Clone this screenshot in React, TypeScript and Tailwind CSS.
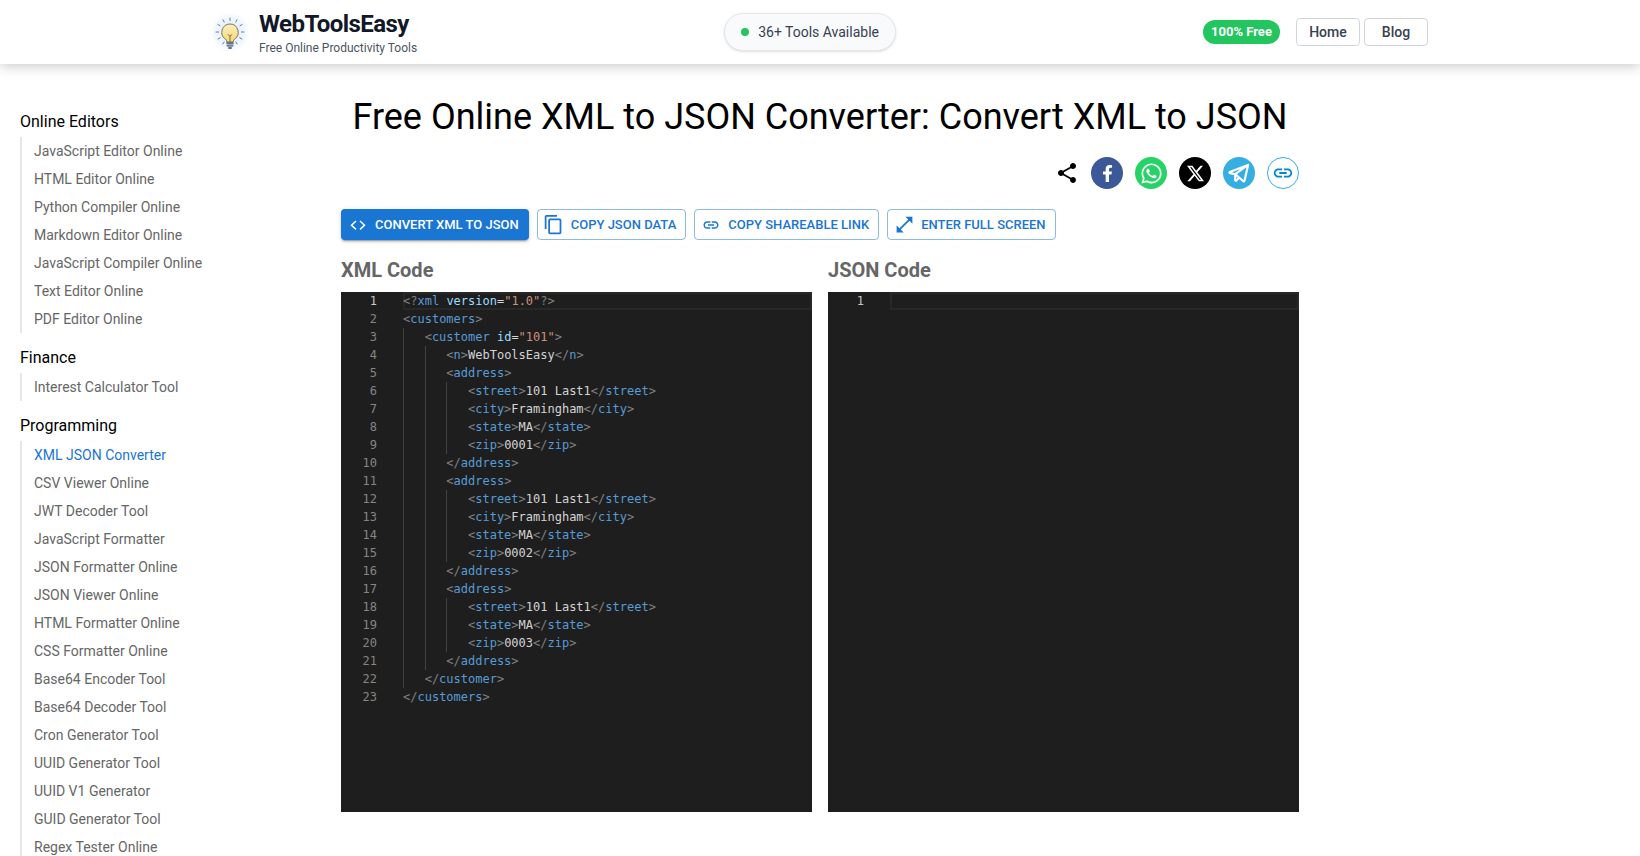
import { FaFacebookF, FaWhatsapp } from 'react-icons/fa';
import { FaXTwitter } from 'react-icons/fa6';
import { MdContentCopy, MdLink, MdOpenInFull, MdShare } from 'react-icons/md';
import { PiTelegramLogoBold } from 'react-icons/pi';

type Seg = [string, string];

const D = 'text-[#808080]';
const T = 'text-[#569cd6]';
const A = 'text-[#9cdcfe]';
const S = 'text-[#ce9178]';
const X = 'text-[#d4d4d4]';

const sidebar = [
	{
		title: 'Online Editors',
		items: [
			'JavaScript Editor Online',
			'HTML Editor Online',
			'Python Compiler Online',
			'Markdown Editor Online',
			'JavaScript Compiler Online',
			'Text Editor Online',
			'PDF Editor Online'
		]
	},
	{ title: 'Finance', items: ['Interest Calculator Tool'] },
	{
		title: 'Programming',
		items: [
			'XML JSON Converter',
			'CSV Viewer Online',
			'JWT Decoder Tool',
			'JavaScript Formatter',
			'JSON Formatter Online',
			'JSON Viewer Online',
			'HTML Formatter Online',
			'CSS Formatter Online',
			'Base64 Encoder Tool',
			'Base64 Decoder Tool',
			'Cron Generator Tool',
			'UUID Generator Tool',
			'UUID V1 Generator',
			'GUID Generator Tool',
			'Regex Tester Online'
		]
	}
];

const open = (name: string): Seg[] => [
	['<', D],
	[name, T],
	['>', D]
];
const close = (name: string): Seg[] => [
	['</', D],
	[name, T],
	['>', D]
];
const el = (name: string, value: string): Seg[] => [...open(name), [value, X], ...close(name)];

// indent = how many guide columns the row has
const lines: { indent: number; segs: Seg[] }[] = [
	{
		indent: 0,
		segs: [
			['<?', D],
			['xml', T],
			[' ', X],
			['version', A],
			['=', X],
			['"1.0"', S],
			['?>', D]
		]
	},
	{ indent: 0, segs: open('customers') },
	{
		indent: 1,
		segs: [
			['<', D],
			['customer', T],
			[' ', X],
			['id', A],
			['=', X],
			['"101"', S],
			['>', D]
		]
	},
	{ indent: 2, segs: el('n', 'WebToolsEasy') },
	{ indent: 2, segs: open('address') },
	{ indent: 3, segs: el('street', '101 Last1') },
	{ indent: 3, segs: el('city', 'Framingham') },
	{ indent: 3, segs: el('state', 'MA') },
	{ indent: 3, segs: el('zip', '0001') },
	{ indent: 2, segs: close('address') },
	{ indent: 2, segs: open('address') },
	{ indent: 3, segs: el('street', '101 Last1') },
	{ indent: 3, segs: el('city', 'Framingham') },
	{ indent: 3, segs: el('state', 'MA') },
	{ indent: 3, segs: el('zip', '0002') },
	{ indent: 2, segs: close('address') },
	{ indent: 2, segs: open('address') },
	{ indent: 3, segs: el('street', '101 Last1') },
	{ indent: 3, segs: el('state', 'MA') },
	{ indent: 3, segs: el('zip', '0003') },
	{ indent: 2, segs: close('address') },
	{ indent: 1, segs: close('customer') },
	{ indent: 0, segs: close('customers') }
];

function Bulb() {
	return (
		<svg className="h-[40px] w-[40px]" viewBox="0 0 40 40">
			<defs>
				<radialGradient id="glow">
					<stop offset="0%" stopColor="#dbeafe" />
					<stop offset="70%" stopColor="#eff6ff" />
					<stop offset="100%" stopColor="#ffffff" />
				</radialGradient>
				<linearGradient id="glass" x1="0" x2="0" y1="0" y2="1">
					<stop offset="0%" stopColor="#fdf0bd" />
					<stop offset="100%" stopColor="#f7d774" />
				</linearGradient>
			</defs>
			<circle cx="20" cy="20" fill="url(#glow)" r="20" />
			<path
				d="M20 6v2.600M13 7.800l1.200 2.200M27 7.800l-1.200 2.200M7.800 12.500l2.200 1.200M32.200 12.500l-2.200 1.200M6 20h2.600M31.400 20H34M8 27l2.200-1.200M32 27l-2.200-1.200M12.800 32l1.300-2M27.200 32l-1.300-2"
				fill="none"
				stroke="#5f6f7d"
				strokeLinecap="round"
				strokeWidth="0.9"
			/>
			<path
				d="M20 12a8.300 8.300 0 0 0-4.500 15.200c.9.700 1.200 1.600 1.300 2.800h6.400c.1-1.200.4-2.100 1.300-2.800A8.300 8.300 0 0 0 20 12z"
				fill="url(#glass)"
				stroke="#6b6a55"
				strokeWidth="0.9"
			/>
			<path d="M17.800 22.500l2.200 1.600 2.200-1.600M20 24v6" fill="none" stroke="#6b6a55" strokeWidth="0.9" />
			<rect fill="#64748b" height="2.200" rx="1" width="7.500" x="16.250" y="30" />
			<rect fill="#71829a" height="2.200" rx="1" width="7" x="16.500" y="32.600" />
			<rect fill="#64748b" height="2" rx="1" width="4" x="18" y="35" />
		</svg>
	);
}

function CodeChevrons() {
	return (
		<svg className="-ml-[2px] h-[18px] w-[18px]" fill="none" stroke="currentColor" strokeWidth="1.5" viewBox="0 0 18 18">
			<path d="M7 5 2.500 9.200 7 13.400M11 5l4.500 4.200L11 13.400" />
		</svg>
	);
}

function ActionButton({ icon, label, primary }: { icon: React.ReactNode; label: string; primary?: boolean }) {
	return (
		<button
			className={
				primary
					? 'flex h-[31px] items-center gap-[8px] rounded bg-[#1976d2] px-[10px] text-[13px] font-medium uppercase text-white shadow-[0_3px_1px_-2px_rgba(0,0,0,0.2),0_2px_2px_0_rgba(0,0,0,0.14),0_1px_5px_0_rgba(0,0,0,0.12)]'
					: 'flex h-[31px] items-center gap-[8px] rounded border border-[#1976d280] px-[9px] text-[13px] font-medium uppercase text-[#1976d2]'
			}
			type="button"
		>
			{icon}
			{label}
		</button>
	);
}

function Editor({ rows }: { rows: { indent: number; segs: Seg[] }[] }) {
	return (
		<div className="h-[520px] overflow-hidden bg-[#1e1e1e] font-['DejaVu_Sans_Mono',monospace] text-[12px] leading-[18px] whitespace-pre">
			{rows.map((row, i) => (
				<div className="flex h-[18px]" key={i}>
					<div
						className={`w-[36px] text-right ${i === 0 ? 'text-[#c6c6c6]' : 'text-[#858585]'}`}
					>
						{i + 1}
					</div>
					<div
						className={`ml-[26px] flex flex-1 ${i === 0 ? 'shadow-[inset_0_0_0_2px_#282828]' : ''}`}
					>
						{Array.from({ length: row.indent }).map((_, g) => (
							<span className="w-[21.67px] shrink-0 border-l border-[#404040]" key={g} />
						))}
						<span>
							{row.segs.map((seg, s) => (
								<span className={seg[1]} key={s}>
									{seg[0]}
								</span>
							))}
						</span>
					</div>
				</div>
			))}
		</div>
	);
}

export default function App() {
	return (
		<div className="flex h-screen flex-col overflow-hidden bg-white font-['Roboto',sans-serif]">
			<header className="relative z-10 flex h-[64px] shrink-0 items-center justify-between bg-white pl-[210px] pr-[212px] shadow-[0_2px_12px_rgba(0,0,0,0.22)]">
				<div className="flex items-center gap-[9px]">
					<Bulb />
					<div>
						<div className="text-[24px] font-bold leading-[30px] tracking-[-0.55px] text-[#111827]">
							WebToolsEasy
						</div>
						<div className="mt-[1px] text-[12px] leading-[16px] text-[#4b5563]">
							Free Online Productivity Tools
						</div>
					</div>
				</div>
				<div className="flex h-[38px] items-center gap-[9px] rounded-full border border-[#e5e7eb] bg-[#f8fafc] pl-[16px] pr-[16px] text-[14px] text-[#374151] shadow-sm">
					<span className="h-[8px] w-[8px] rounded-full bg-[#22c55e]" />
					36+ Tools Available
				</div>
				<div className="flex items-center">
					<span className="mr-[16px] flex h-[24px] w-[77px] items-center justify-center rounded-full bg-[#22c55e] text-[13px] font-bold text-white">
						100% Free
					</span>
					<a className="mr-[4px] flex h-[28px] w-[64px] items-center justify-center rounded border border-[#d1d5db] text-[14px] font-medium text-[#374151]">
						Home
					</a>
					<a className="flex h-[28px] w-[64px] items-center justify-center rounded border border-[#d1d5db] text-[14px] font-medium text-[#374151]">
						Blog
					</a>
				</div>
			</header>
			<div className="flex flex-1 overflow-hidden">
				<aside className="w-[341px] shrink-0 pl-[20px] pt-[46px]">
					{sidebar.map(group => (
						<div className="mb-[13px]" key={group.title}>
							<div className="mb-[3px] text-[16px] leading-[24px] text-black">{group.title}</div>
							<ul className="border-l-2 border-[#e5e7eb]">
								{group.items.map(item => (
									<li
										className={`h-[28px] pl-[12px] text-[14px] leading-[28px] ${item === 'XML JSON Converter' ? 'text-[#1976d2]' : 'text-[#666666]'}`}
										key={item}
									>
										{item}
									</li>
								))}
							</ul>
						</div>
					))}
				</aside>
				<main className="w-[958px] shrink-0">
					<h1 className="mt-[29px] text-center text-[36px] leading-[48px] text-black">
						Free Online XML to JSON Converter: Convert XML to JSON
					</h1>
					<div className="mt-[16px] flex h-[32px] items-center justify-end gap-[12px]">
						<MdShare className="text-[24px] text-black" />
						<span className="flex h-[32px] w-[32px] items-center justify-center rounded-full bg-[#3b5998] text-[17px] text-white">
							<FaFacebookF />
						</span>
						<span className="flex h-[32px] w-[32px] items-center justify-center rounded-full bg-[#25d366] text-[23px] text-white">
							<FaWhatsapp />
						</span>
						<span className="flex h-[32px] w-[32px] items-center justify-center rounded-full bg-black text-[19px] text-white">
							<FaXTwitter />
						</span>
						<span className="flex h-[32px] w-[32px] items-center justify-center rounded-full bg-[#37aee2] text-[23px] text-white">
							<PiTelegramLogoBold />
						</span>
						<span className="flex h-[32px] w-[32px] items-center justify-center rounded-full border border-[#37aee2] text-[22px] text-[#0288d1]">
							<MdLink />
						</span>
					</div>
					<div className="mt-[20px] flex gap-[8px]">
						<ActionButton icon={<CodeChevrons />} label="Convert XML to JSON" primary />
						<ActionButton
							icon={<MdContentCopy className="-ml-[3.5px] -mr-[1.5px] text-[21px]" />}
							label="Copy JSON data"
						/>
						<ActionButton icon={<MdLink className="-ml-[2px] text-[18px]" />} label="Copy shareable link" />
						<ActionButton
							icon={<MdOpenInFull className="-ml-[3.5px] -mr-[1.5px] text-[21px]" />}
							label="Enter full screen"
						/>
					</div>
					<div className="mt-[19px] grid grid-cols-[471px_471px] gap-x-[16px]">
						<div>
							<h2 className="mb-[10px] text-[20px] font-bold leading-[23px] text-[#666666]">XML Code</h2>
							<Editor rows={lines} />
						</div>
						<div>
							<h2 className="mb-[10px] text-[20px] font-bold leading-[23px] text-[#666666]">JSON Code</h2>
							<Editor rows={[{ indent: 0, segs: [] }]} />
						</div>
					</div>
				</main>
			</div>
		</div>
	);
}
